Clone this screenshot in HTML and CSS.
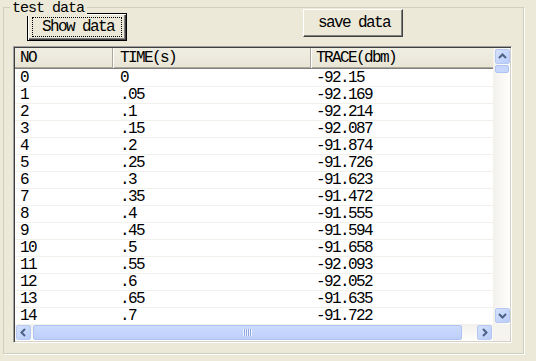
FILE: index.html
```html
<!DOCTYPE html>
<html>
<head>
<meta charset="utf-8">
<link rel="stylesheet" href="styles.css">
</head>
<body>
<div class="group">
  <span class="legend">test data</span>
  <div class="toolbar">
    <button class="btn btn-default"><span class="focus">Show data</span></button>
    <button class="btn btn-save">save data</button>
  </div>
  <div class="list">
    <div class="main">
      <div class="header">
        <div class="hcell c1">NO</div>
        <div class="hcell c2">TIME(s)</div>
        <div class="hcell c3">TRACE(dbm)</div>
      </div>
      <div class="rows">
        <div class="row"><span class="c1">0</span><span class="c2">0</span><span class="c3">-92.15</span></div>
        <div class="row"><span class="c1">1</span><span class="c2">.05</span><span class="c3">-92.169</span></div>
        <div class="row"><span class="c1">2</span><span class="c2">.1</span><span class="c3">-92.214</span></div>
        <div class="row"><span class="c1">3</span><span class="c2">.15</span><span class="c3">-92.087</span></div>
        <div class="row"><span class="c1">4</span><span class="c2">.2</span><span class="c3">-91.874</span></div>
        <div class="row"><span class="c1">5</span><span class="c2">.25</span><span class="c3">-91.726</span></div>
        <div class="row"><span class="c1">6</span><span class="c2">.3</span><span class="c3">-91.623</span></div>
        <div class="row"><span class="c1">7</span><span class="c2">.35</span><span class="c3">-91.472</span></div>
        <div class="row"><span class="c1">8</span><span class="c2">.4</span><span class="c3">-91.555</span></div>
        <div class="row"><span class="c1">9</span><span class="c2">.45</span><span class="c3">-91.594</span></div>
        <div class="row"><span class="c1">10</span><span class="c2">.5</span><span class="c3">-91.658</span></div>
        <div class="row"><span class="c1">11</span><span class="c2">.55</span><span class="c3">-92.093</span></div>
        <div class="row"><span class="c1">12</span><span class="c2">.6</span><span class="c3">-92.052</span></div>
        <div class="row"><span class="c1">13</span><span class="c2">.65</span><span class="c3">-91.635</span></div>
        <div class="row"><span class="c1">14</span><span class="c2">.7</span><span class="c3">-91.722</span></div>
      </div>
    </div>
    <div class="vscroll">
      <div class="sbtn"><svg width="15" height="15" viewBox="0 0 15 15"><path d="M4 9 L7.5 5.5 L11 9" fill="none" stroke="#4D6185" stroke-width="2"/></svg></div>
      <div class="vthumb"></div>
      <div class="vtrack"></div>
      <div class="sbtn"><svg width="15" height="15" viewBox="0 0 15 15"><path d="M4 6 L7.5 9.5 L11 6" fill="none" stroke="#4D6185" stroke-width="2"/></svg></div>
    </div>
    <div class="hscroll">
      <div class="sbtn"><svg width="15" height="15" viewBox="0 0 15 15"><path d="M9 4 L5.5 7.5 L9 11" fill="none" stroke="#4D6185" stroke-width="2"/></svg></div>
      <div class="hthumb"><span class="grip"></span></div>
      <div class="htrack"></div>
      <div class="sbtn"><svg width="15" height="15" viewBox="0 0 15 15"><path d="M6 4 L9.5 7.5 L6 11" fill="none" stroke="#4D6185" stroke-width="2"/></svg></div>
    </div>
    <div class="corner"></div>
  </div>
</div>
</body>
</html>
```
FILE: styles.css
```css
html, body {
  margin: 0;
  padding: 0;
  background: #ECE9D8;
}
body {
  width: 536px;
  height: 361px;
  overflow: hidden;
  font-family: "Liberation Mono", "DejaVu Sans Mono", monospace;
  font-size: 16px;
  letter-spacing: -1.6px;
  color: #000;
}
.group {
  position: relative;
  margin: 7px 11px 0 3px;
  width: 519px;
  height: 345px;
  border: 1px solid #D0D0BF;
  box-shadow: 1px 1px 0 #fff;
}
.legend {
  position: absolute;
  left: 6px;
  top: -6px;
  padding: 0 3px 0 2px;
  background: #ECE9D8;
  font-size: 15px;
  letter-spacing: -1px;
  line-height: 14px;
}
.toolbar {
  display: flex;
  align-items: flex-start;
  height: 38px;
  padding-left: 23px;
}
.btn {
  box-sizing: border-box;
  width: 100px;
  height: 28px;
  padding: 0;
  font: inherit;
  letter-spacing: -1.6px;
  color: #000;
  background: #ECE9D8;
  display: flex;
  align-items: center;
  justify-content: center;
}
.btn-default {
  margin-top: 5px;
  border: 1px solid #000;
  box-shadow: inset 1px 1px 0 #fff, inset -1px -1px 0 #404040, inset -2px -2px 0 #808080;
}
.focus {
  box-sizing: border-box;
  width: 90px;
  height: 20px;
  border: 1px dotted #000;
  display: flex;
  align-items: center;
  justify-content: center;
  padding-left: 2px;
}
.btn-save {
  margin-top: 1px;
  margin-left: 176px;
  border-top: 1px solid #fff;
  border-left: 1px solid #fff;
  border-right: 1px solid #404040;
  border-bottom: 1px solid #404040;
  box-shadow: inset -1px -1px 0 #808080;
  padding-left: 2px;
}
.list {
  margin-left: 9px;
  width: 499px;
  height: 297px;
  box-sizing: border-box;
  border-top: 1px solid #A0A0A0;
  border-left: 1px solid #A0A0A0;
  border-right: 1px solid #fff;
  border-bottom: 1px solid #fff;
  box-shadow: inset 1px 1px 0 #404040, inset -1px -1px 0 #D4D0C8;
  padding: 1px;
  display: grid;
  grid-template-columns: 478px 17px;
  grid-template-rows: 276px 17px;
  background: #fff;
}
.main {
  overflow: hidden;
  background: #fff;
}
.header {
  display: flex;
  height: 21px;
  box-sizing: border-box;
  background: linear-gradient(#F0EEE3, #E8E5D6);
  border-bottom: 1px solid #808080;
  box-shadow: inset 0 -1px 0 #ACA899;
}
.hcell {
  box-sizing: border-box;
  line-height: 20px;
  border-right: 1px solid #ACA899;
  box-shadow: 1px 0 0 #fff;
  white-space: nowrap;
}
.c1 { width: 98px; padding-left: 5px; box-sizing: border-box; }
.c2 { width: 198px; padding-left: 7px; box-sizing: border-box; }
.c3 { flex: 1; padding-left: 5px; box-sizing: border-box; }
.hcell.c3 { border-right: none; box-shadow: none; }
.rows {
  padding-top: 1px;
}
.row {
  display: flex;
  height: 17px;
  box-sizing: border-box;
  line-height: 16px;
  border-bottom: 1px solid #F1F0EA;
  white-space: nowrap;
}
.vscroll {
  display: flex;
  flex-direction: column;
  background: linear-gradient(90deg, #F3F1EC, #FEFEFB);
  padding: 1px 1px 1px 2px;
  box-sizing: border-box;
}
.hscroll {
  display: flex;
  align-items: center;
  background: linear-gradient(#F3F1EC, #FEFEFB);
  padding: 1px;
  box-sizing: border-box;
}
.corner {
  background: #F5F4EF;
}
.sbtn {
  box-sizing: border-box;
  width: 15px;
  height: 15px;
  border: 1px solid #B7C9F2;
  border-radius: 2px;
  background: linear-gradient(135deg, #D5E1FD, #B9CDFA);
  display: flex;
  align-items: center;
  justify-content: center;
  flex: none;
}
.sbtn svg { display: block; margin: -1px; }
.vthumb {
  margin-top: 1px;
  height: 8px;
  border: 1px solid #AEC2F3;
  border-radius: 2px;
  background: #C6D6FC;
  box-sizing: border-box;
  flex: none;
}
.vtrack { flex: 1; }
.hthumb {
  margin-left: 2px;
  width: 429px;
  height: 15px;
  box-sizing: border-box;
  border: 1px solid #AEC2F3;
  border-radius: 2px;
  background: linear-gradient(#CCDAFD, #BCCFFB);
  display: flex;
  align-items: center;
  justify-content: center;
  flex: none;
}
.grip {
  width: 9px;
  height: 7px;
  background: repeating-linear-gradient(90deg, #EEF3FE 0 1px, #8EA6E2 1px 2px);
}
.htrack { flex: 1; }
```
